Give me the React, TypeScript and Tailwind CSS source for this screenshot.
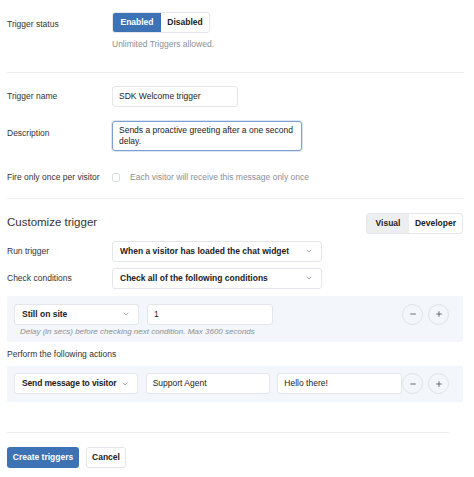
import { ChevronDown, Minus, Plus } from 'lucide-react';

const font = { fontFamily: '"Liberation Sans", Arial, sans-serif' };

function Select({ value, className = '' }: { value: string; className?: string }) {
  return (
    <div className={`flex items-center justify-between h-[21px] bg-white border border-[#e3e6ea] rounded-[3px] pl-[7px] pr-[8px] text-[8.5px] font-bold text-[#222] whitespace-nowrap ${className}`}>
      <span>{value}</span>
      <ChevronDown size={8} strokeWidth={2} className="text-[#777] shrink-0 ml-[4px]" />
    </div>
  );
}

function Input({ value, className = '' }: { value: string; className?: string }) {
  return (
    <div className={`flex items-center h-[21px] bg-white border border-[#e3e6ea] rounded-[3px] px-[6px] text-[8.5px] text-[#222] ${className}`}>
      {value}
    </div>
  );
}

function RoundBtn({ kind }: { kind: 'minus' | 'plus' }) {
  return (
    <div className="w-[21px] h-[21px] rounded-full border border-[#dfe3e8] flex items-center justify-center text-[#555]">
      {kind === 'minus' ? <Minus size={8} strokeWidth={2.5} /> : <Plus size={8} strokeWidth={2.5} />}
    </div>
  );
}

export default function App() {
  return (
    <div style={font} className="w-[474px] h-[477px] bg-white text-[#333] px-[7px] pt-[12px] text-[8.5px] overflow-hidden">
      {/* trigger status */}
      <div className="flex">
        <div className="w-[105px] pt-[6px]">Trigger status</div>
        <div>
          <div className="flex h-[21px] w-[98px] border border-[#e3e6ea] rounded-[3px] overflow-hidden font-bold">
            <div className="w-[48px] bg-[#3d72b4] text-white flex items-center justify-center">Enabled</div>
            <div className="flex-1 flex items-center justify-center text-[#222]">Disabled</div>
          </div>
          <div className="mt-[5px] text-[#8a8f96]">Unlimited Triggers allowed.</div>
        </div>
      </div>

      <div className="mt-[21px] mr-[3px] border-t border-[#eeeff1]" />

      <div className="flex items-center mt-[13px]">
        <div className="w-[105px]">Trigger name</div>
        <Input value="SDK Welcome trigger" className="w-[126px]" />
      </div>

      <div className="flex mt-[14px]">
        <div className="w-[105px] pt-[6px]">Description</div>
        <div className="w-[190px] h-[30px] border-[1.5px] border-[#7c9fd0] rounded-[3px] px-[6px] pt-[3px] leading-[11px] text-[#222] shadow-[0_0_0_1px_#dbe6f5]">
          Sends a proactive greeting after a one second delay.
        </div>
      </div>

      <div className="flex items-center mt-[20px]">
        <div className="w-[105px]">Fire only once per visitor</div>
        <div className="w-[8px] h-[9px] border border-[#dcdfe3] rounded-[2px] mr-[10px]" />
        <div className="text-[#8a8f96]">Each visitor will receive this message only once</div>
      </div>

      <div className="mt-[14px] mr-[3px] border-t border-[#eeeff1]" />

      <div className="flex items-center justify-between mt-[14px] mr-[4px]">
        <div className="text-[11.5px] text-[#333]">Customize trigger</div>
        <div className="flex h-[21px] w-[97px] border border-[#e3e6ea] rounded-[3px] overflow-hidden font-bold text-[#222]">
          <div className="w-[42px] bg-[#edeef0] flex items-center justify-center">Visual</div>
          <div className="flex-1 flex items-center justify-center">Developer</div>
        </div>
      </div>

      <div className="flex items-center mt-[7px]">
        <div className="w-[105px]">Run trigger</div>
        <Select value="When a visitor has loaded the chat widget" className="w-[210px]" />
      </div>

      <div className="flex items-center mt-[6px]">
        <div className="w-[105px]">Check conditions</div>
        <Select value="Check all of the following conditions" className="w-[210px]" />
      </div>

      <div className="mt-[7px] mr-[4px] bg-[#f3f6fa] h-[46px] px-[7px] pt-[8px] rounded-[2px]">
        <div className="flex items-center">
          <Select value="Still on site" className="w-[125px]" />
          <Input value="1" className="w-[126px] ml-[8px]" />
          <div className="ml-auto flex gap-[5px] mr-[7px]">
            <RoundBtn kind="minus" />
            <RoundBtn kind="plus" />
          </div>
        </div>
        <div className="mt-[1px] pl-[6px] italic text-[8px] text-[#8a8f96]">Delay (in secs) before checking next condition. Max 3600 seconds</div>
      </div>

      <div className="mt-[8px] h-[8px] leading-[8px]">Perform the following actions</div>

      <div className="mt-[8px] mr-[4px] bg-[#f3f6fa] h-[36px] px-[7px] flex items-center rounded-[2px]">
        <Select value="Send message to visitor" className="w-[125px] tracking-[-0.15px]" />
        <Input value="Support Agent" className="w-[126px] ml-[8px]" />
        <Input value="Hello there!" className="w-[126px] ml-[7px]" />
        <div className="ml-auto flex gap-[5px] mr-[7px]">
          <RoundBtn kind="minus" />
          <RoundBtn kind="plus" />
        </div>
      </div>

      <div className="mt-[30px] mr-[18px] border-t border-[#eeeff1]" />

      <div className="flex mt-[14px] gap-[7px] font-bold">
        <div className="w-[72px] h-[21px] bg-[#3d72b4] text-white rounded-[3px] flex items-center justify-center">Create triggers</div>
        <div className="w-[40px] h-[21px] border border-[#e3e6ea] rounded-[3px] flex items-center justify-center text-[#222]">Cancel</div>
      </div>
    </div>
  );
}
